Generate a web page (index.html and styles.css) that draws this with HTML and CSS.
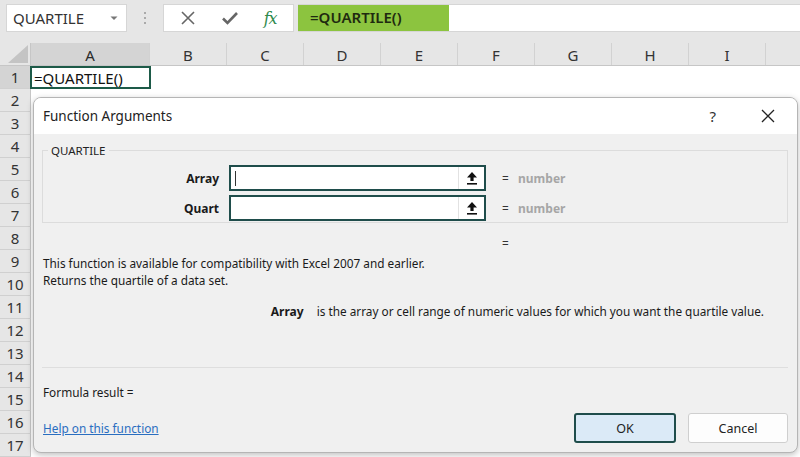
FILE: index.html
```html
<!DOCTYPE html>
<html lang="en">
<head>
<meta charset="utf-8">
<title>QUARTILE – Function Arguments</title>
<link rel="stylesheet" href="styles.css">
</head>
<body>
<div class="app">
  <header class="formula-bar">
    <div class="name-box">
      <span>QUARTILE</span>
      <svg class="caret" width="8" height="5" viewBox="0 0 8 5"><path d="M0.5 0.5 L4 4 L7.5 0.5 Z" fill="#777"/></svg>
    </div>
    <div class="grip"><i></i><i></i><i></i></div>
    <div class="fx-buttons">
      <svg width="16" height="16" viewBox="0 0 16 16"><path d="M2 2 L14 14 M14 2 L2 14" stroke="#666" stroke-width="1.6" fill="none"/></svg>
      <svg width="18" height="16" viewBox="0 0 18 16"><path d="M2 8.5 L6.5 13 L16 3" stroke="#666" stroke-width="2.6" fill="none"/></svg>
      <span class="fx">fx</span>
    </div>
    <div class="formula-input">
      <div class="formula-text">=QUARTILE()</div>
    </div>
  </header>

  <div class="sheet">
    <div class="col-heads">
      <div class="corner"><svg width="22" height="18" viewBox="0 0 22 18"><path d="M22 0 L22 18 L2 18 Z" fill="#c4c4c4"/></svg></div>
      <div class="col-head active">A</div>
      <div class="col-head">B</div>
      <div class="col-head">C</div>
      <div class="col-head">D</div>
      <div class="col-head">E</div>
      <div class="col-head">F</div>
      <div class="col-head">G</div>
      <div class="col-head">H</div>
      <div class="col-head">I</div>
      <div class="col-head">J</div>
    </div>
    <div class="rows">
      <div class="row"><div class="row-head">1</div><div class="cell cell-a active-cell">=QUARTILE()</div></div>
      <div class="row"><div class="row-head">2</div></div>
      <div class="row"><div class="row-head">3</div></div>
      <div class="row"><div class="row-head">4</div></div>
      <div class="row"><div class="row-head">5</div></div>
      <div class="row"><div class="row-head">6</div></div>
      <div class="row"><div class="row-head">7</div></div>
      <div class="row"><div class="row-head">8</div></div>
      <div class="row"><div class="row-head">9</div></div>
      <div class="row"><div class="row-head">10</div></div>
      <div class="row"><div class="row-head">11</div></div>
      <div class="row"><div class="row-head">12</div></div>
      <div class="row"><div class="row-head">13</div></div>
      <div class="row"><div class="row-head">14</div></div>
      <div class="row"><div class="row-head">15</div></div>
      <div class="row"><div class="row-head">16</div></div>
      <div class="row"><div class="row-head">17</div></div>
    </div>
  </div>

  <section class="dialog">
    <div class="dialog-title">
      <span class="title-text">Function Arguments</span>
      <span class="help-btn">?</span>
      <svg class="close-btn" width="14" height="14" viewBox="0 0 14 14"><path d="M1 1 L13 13 M13 1 L1 13" stroke="#222" stroke-width="1.3" fill="none"/></svg>
    </div>
    <div class="dialog-body">
      <fieldset class="args">
        <legend>QUARTILE</legend>
        <div class="arg-row">
          <label class="arg-label">Array</label>
          <div class="arg-input"><span class="text-caret"></span><span class="ref-btn"><svg width="12" height="14" viewBox="0 0 12 14"><path d="M6 1 L11 6.5 L7.6 6.5 L7.6 10 L4.4 10 L4.4 6.5 L1 6.5 Z" fill="#111"/><rect x="1" y="12" width="10" height="1.6" fill="#111"/></svg></span></div>
          <span class="eq">=</span>
          <span class="arg-type">number</span>
        </div>
        <div class="arg-row">
          <label class="arg-label">Quart</label>
          <div class="arg-input"><span class="ref-btn"><svg width="12" height="14" viewBox="0 0 12 14"><path d="M6 1 L11 6.5 L7.6 6.5 L7.6 10 L4.4 10 L4.4 6.5 L1 6.5 Z" fill="#111"/><rect x="1" y="12" width="10" height="1.6" fill="#111"/></svg></span></div>
          <span class="eq">=</span>
          <span class="arg-type">number</span>
        </div>
      </fieldset>
      <div class="result-eq"><span class="eq">=</span></div>
      <p class="desc">This function is available for compatibility with Excel 2007 and earlier.<br>Returns the quartile of a data set.</p>
      <div class="arg-help"><b>Array</b><span>is the array or cell range of numeric values for which you want the quartile value.</span></div>
      <div class="divider"></div>
      <div class="formula-result">Formula result =</div>
      <div class="footer">
        <a class="help-link" href="#">Help on this function</a>
        <div class="buttons">
          <button class="btn btn-ok">OK</button>
          <button class="btn">Cancel</button>
        </div>
      </div>
    </div>
  </section>
</div>
</body>
</html>
```

FILE: styles.css
```css
* { box-sizing: border-box; }

html, body {
  margin: 0;
  padding: 0;
}

body {
  width: 800px;
  height: 457px;
  overflow: hidden;
  background: #e6e6e6;
  font-family: "Noto Sans", "Open Sans", sans-serif;
  color: #222;
}

.app {
  position: relative;
  width: 800px;
  height: 457px;
  overflow: hidden;
  background: #e6e6e6;
}

/* ---------- formula bar ---------- */
.formula-bar {
  height: 43px;
  display: flex;
  align-items: flex-start;
  padding: 4px 0 0 6px;
  background: #e6e6e6;
}

.name-box {
  width: 121px;
  height: 28px;
  background: #fff;
  border: 1px solid #d6d6d6;
  display: flex;
  align-items: center;
  justify-content: space-between;
  padding: 0 8px 0 6px;
  font-size: 15px;
  color: #333;
}

.grip {
  width: 36px;
  height: 28px;
  display: flex;
  flex-direction: column;
  align-items: center;
  justify-content: center;
  gap: 3px;
}
.grip i {
  width: 2px;
  height: 2px;
  background: #aaa;
}

.fx-buttons {
  width: 131px;
  height: 28px;
  background: #fff;
  border: 1px solid #d6d6d6;
  display: flex;
  align-items: center;
  justify-content: space-around;
  padding: 0 4px;
}

.fx {
  font-family: "DejaVu Serif", "Liberation Serif", serif;
  font-style: italic;
  font-size: 16px;
  color: #2f8a4c;
  letter-spacing: -1px;
}

.formula-input {
  flex: 1;
  height: 28px;
  margin-left: 4px;
  background: #fff;
  border-top: 1px solid #d6d6d6;
  border-bottom: 1px solid #d6d6d6;
  display: flex;
}

.formula-text {
  width: 151px;
  height: 100%;
  background: #8cc43f;
  padding: 2px 0 0 12px;
  font-size: 15px;
  font-weight: 600;
  color: #1f2a10;
}

/* ---------- grid ---------- */
.sheet {
  display: flex;
  flex-direction: column;
}

.col-heads {
  display: flex;
  height: 23px;
  border-bottom: 1px solid #c6c6c6;
}

.corner {
  width: 31px;
  flex: none;
  display: flex;
  align-items: flex-end;
  justify-content: flex-end;
  padding: 0 2px 2px 0;
  border-right: 1px solid #c6c6c6;
}

.col-head {
  width: 77px;
  flex: none;
  display: flex;
  align-items: center;
  justify-content: center;
  padding-top: 1px;
  font-size: 15px;
  color: #333;
  border-right: 1px solid #d2d2d2;
}
.col-head.active {
  width: 119px;
  background: #d4d4d4;
  color: #2b2b2b;
}

.rows {
  display: flex;
  flex-direction: column;
}

.row {
  display: flex;
  height: 23px;
  background: #fff;
}

.row-head {
  width: 31px;
  flex: none;
  display: flex;
  align-items: center;
  justify-content: center;
  font-size: 15px;
  color: #333;
  background: #e6e6e6;
  border-right: 1px solid #c6c6c6;
  border-bottom: 1px solid #d0d0d0;
}
.row:first-child .row-head {
  background: #d4d4d4;
}

.cell {
  height: 23px;
  font-size: 15px;
  color: #111;
  display: flex;
  align-items: center;
  padding-left: 2px;
}
.cell-a { width: 121px; }
.active-cell {
  border: 2px solid #1d5a48;
  margin-left: -1px;
}

/* ---------- dialog ---------- */
.dialog {
  position: absolute;
  left: 33px;
  top: 97px;
  width: 765px;
  height: 356px;
  background: #f0f0f0;
  border: 1px solid #b5b5b5;
  border-radius: 8px;
  box-shadow: 0 2px 6px rgba(0, 0, 0, 0.25);
  overflow: hidden;
  font-size: 11.8px;
  color: #1a1a1a;
}

.dialog-title {
  height: 36px;
  background: #fff;
  display: flex;
  align-items: center;
  padding: 0 22px 0 9px;
}
.title-text {
  flex: 1;
  font-size: 13.5px;
  color: #222;
}
.help-btn {
  font-size: 15px;
  color: #333;
  margin-right: 45px;
}

.dialog-body {
  padding: 0 9px 0 8px;
  display: flex;
  flex-direction: column;
}

.args {
  margin: 9px 0 0 0;
  padding: 7px 0 5px 0;
  height: 80px;
  border: 1px solid #dcdcdc;
  display: flex;
  flex-direction: column;
  gap: 4px;
}
.args legend {
  margin-left: 5px;
  padding: 0 3px;
  font-size: 11.5px;
  color: #222;
}

.arg-row {
  display: flex;
  align-items: center;
  height: 26px;
}

.arg-label {
  width: 186px;
  text-align: right;
  font-weight: 700;
  font-size: 12px;
  padding-right: 10px;
}

.arg-input {
  width: 257px;
  height: 26px;
  background: #fff;
  border: 2px solid #1f4d4b;
  display: flex;
  align-items: center;
  justify-content: space-between;
}
.text-caret {
  width: 1px;
  height: 15px;
  margin-left: 4px;
  background: #333;
}
.ref-btn {
  width: 26px;
  height: 100%;
  margin-left: auto;
  border-left: 1px solid #e2e2e2;
  display: flex;
  align-items: center;
  justify-content: center;
}

.eq {
  margin-left: 16px;
  width: 16px;
  color: #333;
}
.arg-type {
  font-weight: 700;
  font-size: 12px;
  color: #a6a6a6;
}

.result-eq {
  height: 29px;
  padding: 11px 0 0 444px;
  display: flex;
  align-items: center;
}

.desc {
  margin: 3px 0 0 1px;
  line-height: 17px;
}

.arg-help {
  margin-top: 14px;
  display: flex;
  justify-content: flex-end;
  padding-right: 24px;
}
.arg-help b { font-size: 12px; }
.arg-help span { margin-left: 13px; }

.divider {
  margin-top: 47px;
  border-top: 1px solid #dedede;
}

.formula-result {
  margin: 16px 0 0 1px;
}

.footer {
  margin-top: 13px;
  display: flex;
  justify-content: space-between;
  align-items: center;
}

.help-link {
  margin-left: 1px;
  color: #2a6ec0;
  text-decoration: underline;
}

.buttons {
  display: flex;
  gap: 12px;
}

.btn {
  width: 100px;
  height: 30px;
  background: #fdfdfd;
  border: 1px solid #cfcfcf;
  border-radius: 3px;
  font-family: inherit;
  font-size: 12.5px;
  color: #222;
}
.btn-ok {
  width: 102px;
  background: #dbeaf7;
  border: 2px solid #1f4d4b;
}
```
